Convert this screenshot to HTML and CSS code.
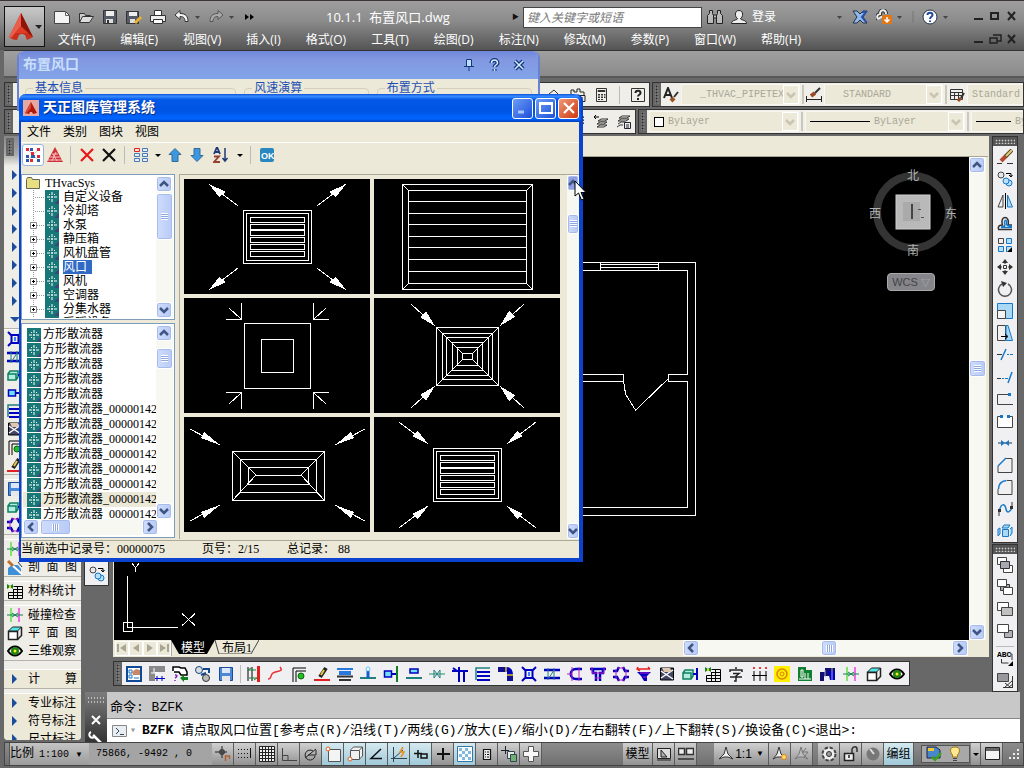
FILE: index.html
```
<!DOCTYPE html>
<html lang="zh-CN">
<head>
  <meta charset="UTF-8">
  <title>10.1.1 布置风口.dwg</title>
  <link rel="stylesheet" href="styles.css">
</head>
<body>

  <header class="app-header">
    <button class="app-logo" title="应用程序菜单">
      <svg width="36" height="30" viewBox="0 0 36 30">
        <path d="M14 1 L2 25 Q5 28 10 28 L12 23 Q15 21 18 23 L20 28 L26 25 Z" fill="#c8301c"/>
        <path d="M14 1 L14 14 L4 26 L2 25 Z" fill="#e8604c"/>
        <path d="M14 1 L26 25 L14 15 Z" fill="#8e1408"/>
        <path d="M8 21 L14 14 L21 21 Z" fill="#e03c28"/>
        <path d="M28 13 h7 l-3 4z" fill="#222"/>
      </svg>
    </button>
    <div class="header-rows">
      <div class="quick-row">
        <div class="quick-icons" data-icons="new open save saveas print undo caret redo caret more"></div>
        <div class="doc-title">10.1.1&nbsp; 布置风口.dwg</div>
        <div class="search-area">
          <span class="tri">▶</span>
          <input class="search-box" type="text" aria-label="搜索" placeholder="键入关键字或短语">
          <div class="mini" data-icons="binoc user"></div>
          <a class="login" href="#">登录</a>
        </div>
        <div class="help-icons" data-icons="caret exchange cloud caret hsep help caret"></div>
        <div class="win-btns" data-icons="wmin wmax wclose"></div>
      </div>
      <div class="menu-row">
        <nav class="menu">
          <a href="#">文件(F)</a><a href="#">编辑(E)</a><a href="#">视图(V)</a><a href="#">插入(I)</a><a href="#">格式(O)</a><a href="#">工具(T)</a><a href="#">绘图(D)</a><a href="#">标注(N)</a><a href="#">修改(M)</a><a href="#">参数(P)</a><a href="#">窗口(W)</a><a href="#">帮助(H)</a>
        </nav>
        <div class="win-btns dark" data-icons="wmin wrest wclose"></div>
      </div>
    </div>
  </header>
  <div class="ribbon-strip"></div>

  <!-- style and property bars -->
  <div class="bar-row">
    <div class="bar bar-std">
      <span class="grip"></span>
      <div class="bar-icons" data-icons="sheet plot cleanup calc | qhelp"></div>
    </div>
    <div class="bar bar-grow">
      <span class="grip"></span>
      <span data-icon="textstyle"></span>
      <div class="combo w-style"><select disabled aria-label="文字样式"><option>_THVAC_PIPETEXT</option></select><i data-icon="down"></i></div>
      <span class="vsep"></span>
      <span data-icon="dimstyle"></span>
      <div class="combo w-style"><select disabled aria-label="标注样式"><option>STANDARD</option></select><i data-icon="down"></i></div>
      <span class="vsep"></span>
      <span data-icon="tablestyle"></span>
      <div class="combo w-style flush"><select disabled aria-label="表格样式"><option>Standard</option></select><i data-icon="down"></i></div>
    </div>
  </div>
  <div class="bar-row">
    <div class="bar bar-layer">
      <span class="grip"></span>
      <div class="bar-icons" data-icons="layers layerprev layerstate"></div>
    </div>
    <div class="bar bar-grow">
      <span class="grip"></span>
      <div class="combo w-color"><b class="swatch"></b><select disabled aria-label="颜色"><option>ByLayer</option></select><i data-icon="down"></i></div>
      <span class="vsep"></span>
      <div class="combo w-line"><b class="line long"></b><select disabled aria-label="线型"><option>ByLayer</option></select><i data-icon="down"></i></div>
      <span class="vsep"></span>
      <div class="combo w-line"><b class="line"></b><select disabled aria-label="线宽"><option>ByLayer</option></select><i data-icon="down"></i></div>
    </div>
  </div>

  <main class="work">
    <aside class="palette" id="palette">
      <div class="palette-head"><span class="grip"></span></div>
    </aside>

    <div class="work-right">
      <div class="work-top">
        <div class="side-bar draw-bar" data-icons="copy"></div>
        <div class="center">
          <section class="drawing">
            <div class="drawing-head"></div>
            <div class="canvas-row">
              <div class="canvas">
                <svg class="plan" viewBox="115 157 854 483" preserveAspectRatio="xMinYMin slice" shape-rendering="crispEdges">
                  <g fill="none" stroke="#fff">
                    <path d="M500 262.500H695.500V515.500H500M500 270.500H687.500V374.500H668.500V381.500H687.500V507.500H500M500 374.500H623.500V381.500H500"/>
                    <path d="M600.500 262V270M658.500 262V270M600 264.500H658M600 267.500H658"/>
                    <path d="M624 381L626 394L636 410L668 379"/>
                    <path d="M128.500 576V626M128 626.500H179M124.500 621.500h9v9h-9zM183 613L196 625M196 613L183 625M133 563l3.500 4l3.500-4M136.500 567v5"/>
                  </g>
                </svg>
                <div class="compass">
                  <svg width="88" height="88" viewBox="0 0 88 88">
                    <circle cx="44" cy="44" r="36" fill="none" stroke="#343434" stroke-width="8"/>
                    <rect x="27" y="27" width="34" height="34" fill="#b9b9b9" stroke="#cfcfcf"/>
                    <rect x="34" y="34" width="17" height="19" fill="#aaa"/>
                    <path d="M43 36V51" stroke="#444" stroke-width="2"/>
                    <path d="M49 41.500h3M52 49.500h3" stroke="#555"/>
                  </svg>
                  <span class="n">北</span><span class="w">西</span><span class="e">东</span><span class="s">南</span>
                </div>
                <button class="wcs">WCS <span>▽</span></button>
              </div>
              <div class="sb v" data-sb="186 17 245"></div>
            </div>
            <div class="tabs-row">
              <div class="tab-nav" data-icons="first prev next last"></div>
              <button class="tab active"><svg viewBox="0 0 44 14" preserveAspectRatio="none"><path d="M0 0H44L36 14H8z" fill="#000"/></svg><span>模型</span></button>
              <button class="tab"><svg viewBox="0 0 44 14" preserveAspectRatio="none"><path d="M0 0L4 14H36L44 0" fill="#ece9d8" stroke="#444"/></svg><span>布局1</span></button>
              <div class="sb h hmain" data-sb="121 16 114"></div>
            </div>
          </section>
          <div class="bottom-bar">
            <span class="grip"></span>
            <div data-icons="t1 t2 t3 t4 t5 | t6 t7 t8 t9 t10 t11 t12 t13 t14 t15 t16 t17 t18 t19 t20 t21 t22 t23 t24 t25 mat zi t29 t30 t31 t32 clash cube eye"></div>
          </div>
        </div>
        <div class="side-col">
          <div class="side-bar">
            <span class="grip-h"></span>
            <div data-icons="erase copy mirror offset array move rotate scale stretch trim extend breakpt break join chamfer fillet spline explode"></div>
          </div>
          <div class="side-bar">
            <span class="grip-h"></span>
            <div data-icons="ord1 ord2 ord3 ord4 _ abc hatchback"></div>
          </div>
        </div>
      </div>

      <section class="command">
        <div class="command-strip" data-icons="dots cx wrench"></div>
        <div class="command-lines">
          <div class="history">命令: BZFK</div>
          <div class="prompt">
            <span data-icon="prompt"></span><span class="drop">▾</span>
            <label for="cmd"><b>BZFK</b> 请点取风口位置[参考点(R)/沿线(T)/两线(G)/放大(E)/缩小(D)/左右翻转(F)/上下翻转(S)/换设备(C)&lt;退出&gt;:</label>
            <input id="cmd" type="text">
          </div>
        </div>
      </section>
    </div>
  </main>

  <footer class="status">
    <button class="scale-btn">比例 <em>1:100</em> <span>▼</span></button>
    <div class="coords">75866, -9492 , 0</div>
    <div class="status-icons" data-icons="s1 s2 s3 s4 s5 s6 s7 s8 s9 s10 s11 s12 s13 s14 s15"></div>
    <span class="gap"></span>
    <button class="cell">模型</button>
    <div class="status-icons" data-icons="r1 r2"></div>
    <span class="gap small"></span>
    <button class="cell ratio"><i data-icon="anno"></i>1:1 <span>▼</span></button>
    <div class="status-icons" data-icons="anno2 anno3"></div>
    <span class="gap tiny"></span>
    <div class="status-icons" data-icons="gear lock ball"></div>
    <button class="cell on">编组</button>
    <div class="tray" data-icons="monitor bulb"></div>
    <div class="status-icons narrow" data-icons="caret2"></div>
    <div class="status-icons" data-icons="clean"></div>
    <span class="corner" data-icon="corner"></span>
  </footer>

  <!-- diffuser palette, behind the library window -->
  <section class="win back">
    <div class="back-title"><span>布置风口</span><div data-icons="pin bhelp bclose"></div></div>
    <div class="back-body">
      <fieldset><legend>基本信息</legend></fieldset>
      <fieldset><legend>风速演算</legend></fieldset>
      <fieldset><legend>布置方式</legend></fieldset>
    </div>
  </section>

  <section class="win lib">
    <div class="lib-title">
      <span data-icon="acad"></span><h1>天正图库管理系统</h1>
      <button class="xp" data-icon="xmin" title="最小化"></button>
      <button class="xp" data-icon="xmax" title="最大化"></button>
      <button class="xp close" data-icon="xclose" title="关闭"></button>
    </div>
    <nav class="lib-menu"><a href="#">文件</a><a href="#">类别</a><a href="#">图块</a><a href="#">视图</a></nav>
    <div class="lib-tools" data-icons="lt1 lt2 | lt3 lt4 | lt5 caret2 lt6 lt7 lt8 caret2 | lt9"></div>
    <div class="lib-body">
      <div class="lib-left">
        <div class="box tree-box">
          <ul class="tree" id="tree"></ul>
          <div class="sb v" data-sb="1 47 64"></div>
        </div>
        <div class="box list-box">
          <div class="list-main">
            <ul class="list" id="list"></ul>
            <div class="sb v" data-sb="7 21 132"></div>
          </div>
          <div class="sb h" data-sb="1 31 67"></div>
        </div>
      </div>
      <div class="lib-right">
        <div class="thumbs" id="thumbs"></div>
        <div class="sb v thin" data-sb="23 20 291"></div>
      </div>
    </div>
    <div class="lib-status"><span>当前选中记录号：00000075</span><span>页号：2/15</span><span>总记录： 88</span></div>
  </section>

  <svg class="pointer" width="14" height="22" viewBox="0 0 14 22"><path d="M1 1V16L4.500 13L7.500 20L10 19L7 12.500H12Z" fill="#fff" stroke="#000"/></svg>

  <script src="script.js"></script>
</body>
</html>
```

FILE: styles.css
```
* {
  box-sizing: border-box;
}
body {
  margin: 0;
  height: 100vh;
  min-height: 600px;
  display: flex;
  flex-direction: column;
  overflow: hidden;
  position: relative;
  background: #686868;
  padding: 0 0 2px 4px;
  font-family: "Liberation Serif", "Noto Sans CJK SC", serif;
  font-size: 12px;
  line-height: 16px;
  color: #000;
}
button, input, select {
  font: inherit;
  color: inherit;
  margin: 0;
  padding: 0;
  border: 0;
  background: none;
  border-radius: 0;
}
a {
  color: inherit;
  text-decoration: none;
}
ul {
  list-style: none;
  margin: 0;
  padding: 0;
}
svg {
  display: block;
  flex: none;
}
[data-icons] {
  display: flex;
  align-items: center;
}
[data-icon] {
  display: flex;
  align-items: center;
  justify-content: center;
}

/* header */
.app-header {
  flex: 0 0 50px;
  margin-left: -4px;
  padding: 6px 4px 0 4px;
  display: flex;
  border-top: 1px solid #3a3438;
  background: linear-gradient(#9e9e9e, #8c8c8c 40%, #545454);
  color: #fff;
  font-family: "Open Sans", "Noto Sans CJK SC", sans-serif;
}
.app-logo {
  width: 41px;
  height: 41px;
  margin-top: -1px;
  border: 1px solid #111;
  background: linear-gradient(#c8c8c8, #8a8a8a);
  display: flex;
  align-items: center;
  justify-content: center;
}
.header-rows {
  flex: 1;
  min-width: 0;
}
.quick-row {
  display: flex;
  align-items: center;
  height: 20px;
}
.quick-icons {
  margin-left: 9px;
  gap: 8px;
  width: 272px;
}
.quick-icons .caret {
  width: 8px;
  margin: 0 -2px 0 -4px;
}
.caret {
  overflow: hidden;
  display: flex;
  justify-content: center;
}
.doc-title {
  width: 186px;
  font-size: 13px;
}
.search-area {
  display: flex;
  align-items: center;
  flex: 1;
}
.tri {
  color: #111;
  font-size: 7px;
  width: 11px;
}
.search-box {
  width: 179px;
  height: 21px;
  background: #fff;
  border: 1px solid #444;
  padding-left: 3px;
  color: #777;
}
.search-box::placeholder {
  color: #777;
  font-style: italic;
}
.mini {
  gap: 8px;
  margin: 0 5px;
}
.help-icons {
  gap: 8px;
  margin-right: 22px;
}
.help-icons .caret {
  width: 8px;
  margin-left: -4px;
}
.help-icons .hsep {
  width: 2px;
  overflow: hidden;
  display: flex;
  justify-content: center;
}
.win-btns {
  color: #222;
}
.menu-row {
  display: flex;
  justify-content: space-between;
  align-items: center;
  height: 20px;
  margin-top: 3px;
}
.menu {
  display: flex;
  gap: 25px;
  margin-left: 13px;
}
.ribbon-strip {
  flex: 0 0 28px;
  margin-bottom: 4px;
  background: linear-gradient(#a0a0a0, #8a8a8a);
  border-top: 1px solid #333;
  border-bottom: 2px solid #585858;
}

/* property bars */
.bar-row {
  display: flex;
  gap: 2px;
  height: 25px;
  margin-bottom: 2px;
  overflow: hidden;
}
.bar {
  display: flex;
  align-items: center;
  flex: none;
  border: 1px solid #333;
  background: #efeee9;
}
.bar-std {
  width: 646px;
}
.bar-layer {
  width: 632px;
}
.bar-grow {
  flex: 1 0 0;
  min-width: 0;
  overflow: hidden;
  gap: 2px;
}
.bar-grow > [data-icon] {
  width: 24px;
}
.bar-icons {
  margin-left: auto;
  gap: 7px;
  padding-right: 3px;
}
.bar-icons .sep {
  margin: 0 3px;
}
.grip {
  flex: 0 0 8px;
  align-self: stretch;
  background: radial-gradient(circle, #222 40%, transparent 50%) 0 3px / 3px 3px #777;
  border: 2px solid #666;
}
.combo {
  display: flex;
  align-items: center;
  flex: none;
  height: 21px;
  border: 1px solid #f8f6ee;
  background: #ece9d8;
  color: #a9a797;
  font-family: "Liberation Mono", monospace;
  font-size: 10px;
}
.combo select {
  flex: 1;
  min-width: 0;
  appearance: none;
  opacity: 1;
  padding-left: 18px;
}
.combo.flush select {
  padding-left: 4px;
}
.combo i {
  width: 16px;
  height: 19px;
  border: 1px solid #fff;
  color: #c9c5b2;
}
.w-style {
  width: 119px;
}
.w-color {
  width: 150px;
}
.w-color select {
  padding-left: 4px;
}
.w-line {
  width: 160px;
}
.w-line select {
  padding-left: 4px;
}
.swatch {
  width: 10px;
  height: 10px;
  margin-left: 4px;
  border: 1px solid #000;
  background: #fff;
}
.line {
  width: 35px;
  height: 1px;
  margin-left: 4px;
  background: #000;
}
.line.long {
  width: 60px;
}
.vsep {
  width: 5px;
  height: 19px;
  border: 1px solid #cbc8bb;
  border-width: 0 1px;
}

/* work area */
.work {
  flex: 1;
  min-height: 0;
  display: flex;
  gap: 3px;
}
.palette {
  flex: 0 0 77px;
  overflow: hidden;
  margin-bottom: 2px;
  border-radius: 0 0 4px 4px;
  background: #efede8;
}
.palette-head {
  height: 30px;
  padding: 2px 0 10px 2px;
  display: flex;
  background: linear-gradient(#888, #a8a8a8 60%, #efede8);
}
.palette-row {
  display: flex;
  align-items: center;
  height: 18px;
  width: 100%;
  gap: 5px;
  padding: 0 4px 0 3px;
}
.wide ~ .palette-row {
  background: #ece9d8;
}
.palette-row span {
  flex: 1;
  display: flex;
  justify-content: space-between;
}
.palette-row i {
  font-style: normal;
}
.palette-sep {
  height: 6px;
  border: solid #b4b2aa;
  border-width: 1px 0;
  border-bottom-color: #fff;
}
.palette-sep.first {
  height: 2px;
}
.palette-sep.wide {
  height: 10px;
}
.work-right {
  flex: 1;
  min-width: 0;
  display: flex;
  flex-direction: column;
}
.work-top {
  flex: 1;
  min-height: 0;
  display: flex;
  padding-right: 6px;
}
.side-bar {
  border: 1px solid #333;
  background: #f0f0f2;
}
.side-bar [data-icons] {
  flex-direction: column;
}
.side-bar button {
  height: 22px;
}
.draw-bar {
  width: 25px;
  height: 450px;
  margin-right: 4px;
  flex-direction: column;
  justify-content: flex-end;
}
.side-col {
  width: 26px;
  display: flex;
  flex-direction: column;
  gap: 1px;
}
.grip-h {
  display: block;
  height: 9px;
  border: 2px solid #555;
  background: radial-gradient(circle, #ccc 40%, transparent 50%) 0 0 / 3px 3px #555;
}
.sep-h {
  width: 18px;
  height: 5px;
  border-bottom: 1px solid #bbb;
}
.center {
  flex: 1;
  min-width: 0;
  display: flex;
  flex-direction: column;
  margin-right: 3px;
}
.drawing {
  flex: 1;
  min-height: 0;
  display: flex;
  flex-direction: column;
  border: 1px solid #ece9d8;
  background: #ece9d8;
}
.drawing-head {
  height: 20px;
  border-bottom: 1px solid #a8a594;
}
.canvas-row {
  flex: 1;
  min-height: 0;
  display: flex;
  padding-right: 2px;
}
.canvas {
  flex: 1;
  min-width: 0;
  position: relative;
  background: #000;
  overflow: hidden;
}
.plan {
  width: 100%;
  height: 100%;
}
.compass {
  position: absolute;
  right: 12px;
  top: 11px;
  width: 88px;
  height: 88px;
  font-family: "Noto Sans CJK SC", sans-serif;
  font-size: 12px;
  color: #b0b0b0;
}
.compass span {
  position: absolute;
}
.compass .n {
  left: 38px;
  top: -1px;
}
.compass .s {
  left: 38px;
  bottom: -2px;
}
.compass .w {
  left: 0;
  top: 37px;
}
.compass .e {
  right: 0;
  top: 37px;
}
.wcs {
  position: absolute;
  right: 34px;
  top: 116px;
  width: 48px;
  height: 18px;
  border: 1px solid #aaa;
  border-radius: 4px;
  background: #85858b;
  color: #444;
  font-family: "Liberation Sans", sans-serif;
  font-size: 11px;
  line-height: 14px;
}
.wcs span {
  font-size: 9px;
  color: #bbb;
}

/* scroll bars */
.sb {
  display: flex;
  flex: none;
  background: #f8f8f2;
}
.sb.v {
  flex-direction: column;
  width: 17px;
}
.sb.h {
  height: 16px;
}
.sb button, .sb .thumb {
  flex: none;
  display: flex;
  align-items: center;
  justify-content: center;
  overflow: hidden;
  border: 1px solid #fff;
  border-radius: 3px;
  background: linear-gradient(90deg, #cfdcfc, #b8cbf6);
  box-shadow: inset 0 0 0 1px #a8bcec;
  color: #3f5684;
}
.sb button {
  width: 16px;
  height: 16px;
}
.sb .thumb::after {
  content: "";
  width: 7px;
  height: 7px;
  background: repeating-linear-gradient(#fff 0 1px, #8fa8e0 1px 2px);
}
.sb.h .thumb::after {
  background: repeating-linear-gradient(90deg, #fff 0 1px, #8fa8e0 1px 2px);
}
.sb.thin, .sb.thin button {
  width: 12px;
}
.sb.thin button:first-child {
  background: #8f9ee0;
}
.tabs-row {
  display: flex;
  height: 16px;
}
.tab-nav {
  margin-left: 1px;
}
.tab-nav button {
  width: 14px;
  height: 15px;
  border: 1px solid #fff;
  box-shadow: 1px 0 0 #aaa;
  color: #a8a594;
  overflow: hidden;
  display: flex;
  align-items: center;
  justify-content: center;
}
.tab {
  position: relative;
  width: 44px;
  line-height: 15px;
}
.tab svg {
  position: absolute;
  left: 0;
  top: 0;
  width: 100%;
  height: 14px;
}
.tab span {
  position: relative;
}
.tab.active {
  color: #fff;
}
.hmain {
  margin-left: auto;
  width: 285px;
  margin-right: 20px;
}
.bottom-bar {
  align-self: flex-start;
  display: flex;
  max-width: 100%;
  margin: 4px 0 6px 0;
  border: 1px solid #333;
  background: #f0f0f2;
  height: 25px;
}
.bottom-bar [data-icons] {
  gap: 7px;
  padding: 0 4px 0 4px;
}
.bottom-bar .sep {
  margin: 0 -3px 0 -1px;
}
.sep {
  width: 1px;
  height: 18px;
  background: #bbb;
}

/* command line */
.command {
  display: flex;
  height: 50px;
  margin: 0 4px 0 1px;
}
.command-strip {
  width: 22px;
  flex-direction: column;
  padding-top: 2px;
  gap: 2px;
  background: linear-gradient(#7c7c7c, #333);
}
.command-lines {
  flex: 1;
  min-width: 0;
  font-family: "Liberation Mono", "Noto Sans CJK SC", monospace;
  font-size: 13px;
  white-space: nowrap;
}
.history {
  height: 27px;
  padding: 7px 3px 0;
  background: #c8c8c8;
  line-height: 17px;
  border-bottom: 1px solid #888;
}
.prompt {
  display: flex;
  align-items: center;
  height: 23px;
  padding-left: 5px;
  background: #fff;
}
.drop {
  width: 14px;
  padding-left: 2px;
  color: #999;
  font-size: 10px;
}
.prompt input {
  flex: 1;
  min-width: 0;
  outline: 0;
}

/* status bar */
.status {
  display: flex;
  height: 24px;
  border: 1px solid #444;
  background: linear-gradient(#8c8c8c, #707070);
}
.status-icons button, .cell {
  width: 22px;
  height: 22px;
  border-right: 1px solid #5c5c5c;
  background: linear-gradient(#d0d0d0, #929292);
  display: flex;
  align-items: center;
  justify-content: center;
}
.status .s6, .status .s7, .status .s8, .status .s9, .status .s10, .status .s12, .cell.on {
  background: linear-gradient(#d5e9f0, #a0c9d8);
}
.scale-btn {
  width: 80px;
  margin-left: 4px;
  border-left: 1px solid #555;
  background: linear-gradient(#c4c4c4, #9c9c9c);
  text-align: left;
}
.scale-btn em {
  font-style: normal;
  margin-left: 2px;
  font-family: "Liberation Mono", monospace;
  font-size: 10px;
}
.scale-btn span, .ratio span {
  font-size: 8px;
  margin-left: 3px;
}
.coords {
  width: 123px;
  padding-left: 7px;
  line-height: 22px;
  background: #a4a4a4;
  font-family: "Liberation Mono", monospace;
  font-size: 10px;
}
.cell {
  width: 30px;
}
.ratio {
  width: 55px;
  gap: 1px;
  font-family: "Liberation Sans", sans-serif;
}
.gap {
  flex: 1;
}
.gap.small {
  flex: 0 0 17px;
}
.gap.tiny {
  flex: 0 0 5px;
}
.tray {
  align-self: center;
  gap: 5px;
  margin: 0 1px 0 7px;
  padding: 0 4px;
  width: 49px;
  height: 18px;
  border: 1px solid #555;
  background: #a8a8a8;
}
.status .narrow button {
  width: 10px;
}
.corner {
  width: 20px;
}

/* floating windows */
.win {
  position: absolute;
  background: #ece9d8;
}
.back {
  left: 17px;
  top: 51px;
  width: 523px;
  height: 60px;
  border: 1px solid #6a80d0;
  border-radius: 7px 7px 0 0;
  border-width: 0 2px;
  overflow: hidden;
}
.back-title {
  display: flex;
  align-items: center;
  justify-content: space-between;
  height: 28px;
  padding: 0 11px 0 4px;
  background: linear-gradient(#6f86dc, #8298e0 30%, #82a4ea);
  color: #c8dffc;
  font-size: 14px;
  font-weight: bold;
}
.back-title div {
  gap: 9px;
}
.back-body {
  display: flex;
  gap: 8px;
  padding: 1px 6px;
}
.back fieldset {
  margin: 0;
  height: 50px;
  padding: 0 7px;
  border: 1px solid #d3cfba;
  border-radius: 4px;
  color: #1c4fb4;
}
.back fieldset:nth-child(1) {
  flex: 216;
}
.back fieldset:nth-child(2) {
  flex: 120;
}
.back fieldset:nth-child(3) {
  flex: 154;
}
.back legend {
  padding: 0 2px;
}
.lib {
  left: 19px;
  top: 94px;
  width: 564px;
  border: 2px solid #0b43d0;
  border-bottom-width: 4px;
  border-top: 0;
  border-right-width: 4px;
  border-radius: 7px 7px 0 0;
}
.lib-title {
  display: flex;
  align-items: center;
  height: 28px;
  margin: 0 -2px;
  padding: 0 2px 0 4px;
  gap: 2px;
  border-radius: 7px 7px 0 0;
  background: linear-gradient(#0a50d8, #3a8cff 8%, #0458e8 20%, #0054e3 60%, #0066ff 88%, #0040c0);
  color: #fff;
}
.lib-title h1 {
  flex: 1;
  margin: 0 0 0 2px;
  font-size: 14px;
  line-height: 20px;
  text-shadow: 1px 1px #0a2c80;
}
.xp {
  width: 21px;
  height: 21px;
  border: 1px solid #fff;
  border-radius: 3px;
  background: linear-gradient(135deg, #6c9cf8, #1c50d8);
}
.xp.close {
  background: linear-gradient(135deg, #f09878, #cc3810);
}
.lib-menu {
  display: flex;
  gap: 12px;
  height: 20px;
  padding: 2px 6px;
}
.lib-tools {
  height: 32px;
  padding: 0 2px 7px 1px;
  border-top: 1px solid #fff;
}
.lib-tools button {
  width: 22px;
  height: 22px;
  display: flex;
  align-items: center;
  justify-content: center;
}
.lib-tools .caret2 {
  width: 12px;
}
.lib-tools .lt1 {
  border: 1px solid #98b5e2;
  border-radius: 3px;
  background: #fff;
}
.lib-tools .lt8 {
  width: 26px;
}
.lib-tools .sep {
  margin: 0 5px 0 4px;
}
.lib-body {
  display: flex;
  gap: 4px;
}
.lib-left {
  width: 154px;
  display: flex;
  flex-direction: column;
  gap: 3px;
}
.box {
  border: 1px solid #7f9db9;
  background: #fff;
  overflow: hidden;
}
.tree-box {
  display: flex;
  height: 146px;
  padding: 1px;
}
.tree {
  flex: 1;
  min-width: 0;
  line-height: 14px;
  overflow: hidden;
}
.tree li {
  display: flex;
  align-items: center;
  height: 14px;
}
.tree li > svg {
  margin-right: 4px;
}
.tree .sel {
  background: #316ac5;
  color: #fff;
  padding-right: 5px;
}
.list-box {
  height: 215px;
  padding: 1px;
}
.list-main {
  display: flex;
  height: 194px;
}
.list {
  flex: 1;
  min-width: 0;
  padding-top: 2px;
  overflow: hidden;
  white-space: nowrap;
}
.list li {
  display: flex;
  align-items: center;
  height: 15px;
  padding-left: 4px;
  line-height: 15px;
  gap: 2px;
}
.list li.hot {
  background: #ece9d8;
}
.list-box > .sb {
  margin-right: 15px;
}
.lib-right {
  flex: 1;
  display: flex;
  gap: 2px;
  border: 1px solid #aca899;
  border-width: 1px 0 0 1px;
}
.thumbs {
  flex: 1;
  display: grid;
  grid-template-columns: 1fr 1fr;
  gap: 4px;
  padding: 4px 5px 7px 4px;
}
.thumbs button {
  background: #000;
  height: 115px;
  overflow: hidden;
}
.lib-status {
  display: flex;
  height: 18px;
  margin-top: 1px;
  border-top: 1px solid #aca899;
}
.lib-status span {
  min-width: 85px;
}
.lib-status span:first-child {
  min-width: 181px;
}
.pointer {
  position: absolute;
  left: 574px;
  top: 180px;
}
```

FILE: script.js
```
// icon artwork, 16x16 each
const P = (d, c = '#333', w = 1, f = 'none') => `<path d="${d}" fill="${f}" stroke="${c}" stroke-width="${w}"/>`;
const F = (d, c = '#333') => `<path d="${d}" fill="${c}"/>`;
const B = '#1878c8', N = '#0000c0', T = '#208080', M = '#c020c0';

const icons = {
  new: P('M.5 2.500h11l4 4v8H.5z', '#444', 1, '#f4f4f4') + P('M11.500 2.500v4h4', '#666'),
  open: P('M1.500 13V4.500h5l1 2h5V8', '#333', 1, '#ccc') + P('M1.500 13.500l3-6h11l-4 6z', '#333', 1, '#ddd'),
  save: P('M1.500 1.500h13v13h-13z', '#333', 1, '#555c68') + F('M4 2h8v5h-8z', '#eee') + F('M4 10h7v4h-7z', '#ddd') + F('M5 11h2v3h-2z', '#333'),
  saveas: P('M.5 2.500h12v12h-12z', '#333', 1, '#555c68') + F('M3 3h8v4h-8z', '#eee') + F('M4 10h5v4h-5z', '#ddd') + P('M9 14l6-6', '#e8b030', 3),
  print: P('M4.500 6V1.500h7V6', '#333', 1, '#fff') + P('M.5 6.500h15v6H.5z', '#333', 1, '#eee') + P('M3.500 10.500h9v4h-9z', '#333', 1, '#fff'),
  undo: P('M1 6l5-4.500V4.500c6 0 8 3 8 8h-3c0-3-1-5-5-5v3z', '#333', 1, '#f4f4f4'),
  redo: P('M15 6l-5-4.500V4.500c-6 0-8 3-8 8h3c0-3 1-5 5-5v3z', '#555', 1, '#aaa'),
  caret: F('M5 7h5l-2.500 3z', '#444'),
  caret2: F('M5 7h6l-3 3z', '#000'),
  more: F('M3 5l4 3-4 3zM8 5l4 3-4 3z', '#000'),
  binoc: P('M2.500 1.500h3v3l1 2v8h-6V6.500l2-2zM10.500 1.500h3v3l2 2v8h-6v-8l1-2zM6.500 6h3v3h-3z', '#222', 1, '#bbb'),
  user: P('M8 1.500c5 0 4 7 1.500 8 0 2 6 1 6 5H.5c0-4 6-3 6-5C4 8.500 3 1.500 8 1.500z', '#222', 1, '#eee'),
  exchange: P('M1 2h4l3 3 3-3h4l-4 6 4 6h-4l-3-3-3 3H1l4-6z', '#234', 1, '#8fb8ee') + P('M10 3h4l-4 5 4 5', '#2850a8', 2),
  cloud: P('M2 10a3 3 0 0 1 2-5c0-5 6-5 6 0', '#333', 4) + P('M2 10a3 3 0 0 1 2-5c0-5 6-5 6 0M2 10l5-3', '#eee', 2) + F('M6 6h10v9H6z', '#e07818') + P('M11 8v5M8.500 10.500L11 13l2.500-2.500', '#fff', 1.5),
  hsep: P('M8 2v12', '#777'),
  help: '<circle cx="8" cy="8" r="7" fill="#fff" stroke="#234"/>' + P('M5.500 6c0-3 5-3 5 0 0 2-2.500 1.500-2.500 4M8 11.500v1.500', '#2048a0', 2),
  wmin: P('M2 10h9', '#222', 2), wmax: P('M3 4h7v6H3z', '#222', 2), wclose: P('M4 3l7 8M11 3l-7 8', '#222', 2),
  wrest: P('M5 3h8v6H9M2 6h7v5H2z', '#222', 1.5),

  sheet: P('M2.500 2.500h11v11h-11zM5 5h6v4H5z'), plot: P('M2 7l5-4 6 6v4H4zM5 9h9'),
  cleanup: P('M1 3h3v2h3V2h3v3h4v4M1 3v6h5M8 8.500h7v6H8zM10 11h3M10 13h3', '#222'),
  calc: P('M3.500 1.500h10v13h-10zM5 3.500h7v1H5z') + F('M5 7h2v1.500h-2zM8 7h2v1.500h-2zM11 7h1.500v1.500h-1.500zM5 9.500h2v1.500h-2zM8 9.500h2v1.500h-2zM11 9.500h1.500v1.500h-1.500zM5 12h2v1h-2zM8 12h2v1h-2z'),
  qhelp: P('M1.500 1.500h13v13h-13z') + P('M5.500 6c0-3 5-3 5 0 0 2-2.500 1.500-2.500 3.500M8 11v2', '#222', 2),
  textstyle: P('M1 11L5 1l4 10M2.500 8h5', '#222', 2) + P('M8 14l3-3', '#9c5020', 4) + P('M11 10l4-5', '#333', 2),
  dimstyle: P('M.5 9v6M15.500 9v6M1 12.500h14', '#222') + P('M5 9l4-3', '#9c4820', 4) + P('M9 6l5-5', '#333', 2),
  tablestyle: P('M1.500 2.500h12v10h-12zM1.500 5.500h12M1.500 8.500h12M5.500 5v8M9.500 5v8') + P('M9 14l3-3', '#9c4820', 3) + P('M12 11l3-5', '#333', 2),
  layers: P('M2 5l3-2h9l-3 2zM2 8l3-2h9l-3 2zM2 11l3-2h9l-3 2z'),
  layerprev: P('M1 3h5M3 1L1 3l2 2', '#000') + P('M5 7l3-2h7l-3 2zM4 10l3-2h7l-3 2zM4 13l3-2h7l-3 2z'),
  layerstate: P('M3 4l3-2h8l-3 2zM2 7l3-2h8l-3 2zM2 10l3-2h4M1 13l3-2h3') + P('M8.500 8.500h6v6h-6zM10 11h3M10 13h3', '#223'),

  up: P('M4 10l4-4 4 4', 'currentColor', 2.5), down: P('M4 6l4 4 4-4', 'currentColor', 2.5),
  left: P('M10 4L6 8l4 4', 'currentColor', 2.5), right: P('M6 4l4 4-4 4', 'currentColor', 2.5),
  first: F('M3 4h2v8h-2zM12 4v8l-6-4z', 'currentColor'), prev: F('M11 4v8l-6-4z', 'currentColor'),
  next: F('M5 4v8l6-4z', 'currentColor'), last: F('M11 4h2v8h-2zM4 4v8l6-4z', 'currentColor'),

  // modify bar
  erase: P('M0 14.500h5M10 14.500h6', '#333') + P('M4 12l5-5', '#b84830', 4) + P('M8.500 7.500L15 1', '#5a4a20', 4) + P('M9 7l6-6', '#e0c880', 2),
  copy: '<circle cx="4" cy="4" r="3" fill="#e8e8e8" stroke="#444"/><circle cx="12" cy="12" r="3" fill="#b8e0f8" stroke="#1878c8"/><circle cx="9" cy="10" r="3" fill="#b8e0f8" stroke="#1878c8"/>' + P('M9 2.500h5v3M12 4l2 2 1.500-2', '#000'),
  mirror: P('M6 2v12H1z', '#444') + P('M8.500 0v16', '#000') + P('M10.500 2v12h5z', B, 1, '#a8d8f4'),
  offset: P('M1 14.500H15M1.500 14c-1-4 3-4 4-4-3-10 8-10 5.500 0H15', '#333', 1.5) + P('M4 12.500h11M4 12c3 0 5-1 3.500-4 0-4 3-3 2 0-.5 2 1 3 5.500 3', B, 1.5),
  array: P('M1.500 1.500h5v5h-5z', '#444') + P('M9.500 1.500h5v5h-5zM1.500 9.500h5v5h-5zM9.500 15V9.500h5', B, 1, '#b8e0f4') + F('M15 10v5h-5z', '#000'),
  move: P('M8 1v4M8 11v4M1 8h4M11 8h4M6.500 6.500h3v3h-3z', '#333') + F('M8 0l3 4H5zM8 16l3-4H5zM0 8l4-3v6zM16 8l-4-3v6z'),
  rotate: P('M5 3a6.500 6.500 0 1 0 6 0', '#555', 1.5) + F('M4 0l6 2-4 4z'),
  scale: P('M.5.500h15v15H.5z', B, 1, '#a8d8f4') + P('M.5 7.500h8v8h-8z', '#444', 1, '#f4f4f4'),
  stretch: P('M.5.500h8v15h-8z', '#444') + P('M9 .5h2l4.500 15H9z', B, 1, '#a8d8f4') + P('M4 11.500h6M8 9l3 2.500L8 14', '#000'),
  trim: P('M0 7.500h5', '#333') + P('M4 13L9 2', B, 1.5) + P('M10 7.500h2M13 7.500h3', B),
  extend: P('M0 9.500h4', '#333') + P('M5 9.500h2M8 9.500h3', B) + P('M11 14l4-11', B, 1.5),
  breakpt: P('M12 3.500H.5v10H16', '#444') + F('M11 2h3v3h-3z', B),
  break: P('M4 3.500H.5v11h15v-11H12', '#444', 1, '#fff') + F('M3 2h3v3H3zM10 2h3v3h-3z', B),
  join: P('M1 8h14', '#333') + F('M4 5l4 3-4 3zM12 5L8 8l4 3z', B),
  chamfer: P('M9 1.500h6v14h-14V9', '#444', 1, '#f0f0f0') + P('M1 9L9 1', B, 1.5),
  fillet: P('M10 1.500h5v14h-14V10', '#444', 1, '#f0f0f0') + P('M1.500 10c0-6 4-8 8-8.500', B, 1.5),
  spline: P('M2 11C4 1 8 3 9 8s4 3 6-1', B, 1.5) + P('M2 8v7M15 1v7', '#333') + F('M1 8h3v3h-3zM13 5h3v3h-3z'),
  explode: P('M5.500 6.500h6v7h-6zM5 5l2-3h6l-2 3zM13 6l2-2v6l-2 3M1 6l2-1v6l-2 2z', B, 1, '#a8d8f4'),
  ord1: P('M.5.500h9v7h-9zM6.500 8.500h9v7h-9z', '#444', 1, '#fff') + P('M3.500 4.500h9v7h-9z', '#333', 1, '#a8a8b0'),
  ord2: P('M3.500 5.500h9v6h-9z', '#333', 1, '#a8a8b0') + P('M.5.500h9v7h-9zM6.500 8.500h9v7h-9z', '#444', 1, '#fff'),
  ord3: P('M.5 1.500h11v8H.5z', '#444', 1, '#fff') + P('M4.500 6.500h11v8h-11z', '#444', 1, '#c0c0c0'),
  ord4: P('M7.500 7.500h8v7h-8z', '#444', 1, '#b0b0b8') + P('M.5 1.500h11v8H.5z', '#444', 1, '#fff'),
  abc: '<text x="0" y="7" font-family="Liberation Mono" font-size="8" font-weight="bold">ABC</text>' + P('M13 4h2v6M4.500 9v4h7', '#333') + F('M16 11v5h-5z', '#000'),
  hatchback: P('M.5 1.500h11v8H.5z', '#444', 1, '#98989c') + P('M15.500 4v11M6 15.500h10M8 15l7-6M8 11l5 4M12 15l4-3', '#333'),

  // duct tools
  t1: P('M1 1h14v14H1z', '#104898', 2, '#fff') + P('M3 4h3v3H3zM3 9h3v3H3zM8 12h5', '#1878c8') + F('M6 6l4-3 4 1v5H7z', '#c88868'),
  t2: F('M0 0h16v6h-16zM0 6h6v9h-6z', '#888') + P('M5 2v5M2 7h7', '#fff') + P('M6 12.500h10M8 10v5M13 10v5', N),
  t3: P('M1 5V1h6l2 1h4l2 4v3H9L7 6H2', '#000', 1.5, '#fff') + P('M3 9c3 0 2 2 0 3M3 14v1', '#8020c0', 1.5) + F('M8 12l4-3v2h4v3h-4v2z', '#108020'),
  t4: '<circle cx="4" cy="4" r="3.500" fill="#ddd" stroke="#104888"/><circle cx="11" cy="12" r="3.500" fill="#bbb" stroke="#333"/>' + P('M8 3h6v4M6 9l5-2', '#104888', 2),
  t5: P('M1.500 1.500h13v13h-13z', '#1c4c98', 1, '#4c88d8') + F('M4 2h8v5h-8z', '#dce8fa') + F('M4 10h8v5h-8z', '#e8e8e8'),
  t6: P('M3 1v14M7 1v14', '#000') + P('M13.500 0v16', '#e02020', 3) + P('M11 4L3 4l3-2M4 12h8L9 14', '#108030'),
  t7: P('M12 1c5 6-6 3-8 7s-1 5-5 5', '#e83030', 1.5),
  t8: P('M15 2H2v14M15 5H5v11', '#000') + '<circle cx="10" cy="10" r="3" fill="#20c020" stroke="#106010"/>',
  t9: P('M0 14h16', '#e02020', 2) + P('M6 11l6-9', '#222', 4) + P('M7 9l3-5', '#e8c840', 2),
  t10: F('M0 2h16v2h-16zM2 5h12v4h-12z', '#2878e0') + P('M0 10.500h16M2 14h12', '#333', 2),
  t11: P('M0 12h16', T, 2) + P('M8 5v7', '#1060d0', 3) + '<circle cx="8" cy="3" r="2" fill="#fff" stroke="#60c0f0"/>',
  t12: P('M1.500 5h7v6h-7z', N, 1.500, '#70e0f0') + P('M8 8h5', N, 2) + P('M14 0v16', '#108020', 2),
  t13: P('M4 3h8v4H4z', N, 1.500, '#70e0f0') + P('M0 12h16', T, 2),
  t14: P('M0 8h16', '#209060') + P('M5 4v8l6-8v8z', T),
  t15: P('M0 5h16M7 1v15M12 5v11M1 2l4 3', N, 2),
  t16: P('M1 14V2h14', T, 1.5) + P('M2 6h13M2 10h13M2 14h13', N, 2),
  t17: F('M0 1h9v5h-9z', '#101090') + F('M8 1c5 0 7 3 7 8h-6V6h-2z', N) + F('M9 9h6v6h-6z', '#101090') + P('M8 1v5M9 9h6', '#e0c020', 1.5),
  t18: P('M1 1l4 4M15 1l-4 4M1 15l4-4M15 15l-4-4M4.500 4h7v8h-7z', N, 2) + P('M8 6v4', '#4080ff', 2),
  t19: P('M0 4h16M0 12h16', N, 2.5) + P('M4 2v12M10 2v12M5 12l5-8', T),
  t20: P('M15 3H9C2 3 2 13 9 13h6', N, 2.5) + P('M5 1v14M12 1v14M0 8h5', M),
  t21: P('M0 3h16M3 3v4h3v8M13 3v4h-3v8', N, 2.5) + P('M2 1v6h12V1M5 12h6', M),
  t22: P('M0 5h4l2-4M0 11h4l2 4M16 5h-4l-2-4M16 11h-4l-2 4', N, 2.5) + P('M3 3v10M13 3v10M5 2h6M5 14h6', M),
  t23: P('M2 3h12M2 1l-1 2 3 2M12 1l2 2', '#e82020', 1.5) + F('M1 6h14l-4 4v5H8l-3-5z', N) + P('M4 7h9M7 11h4', M),
  t24: P('M1.500 2h13v12h-13z', '#000', 1, '#446') + P('M2 12L14 4M2 5l12 8', '#fff', 1.5) + F('M3 2h8l2 4h-8z', '#e0c8b0'),
  t25: P('M1 7h8v6H1zM1 7l2-3h8v6l-2 3', '#108060', 1.5, '#b0ece0') + P('M11 8h3M15 2v12', N, 2),
  t29: P('M1 9.500h15M3 5v10M9 5v10M15 5v10', '#000') + F('M2 1h2v2h-2zM8 1h2v2h-2zM14 1h2v2h-2z', '#e04040'),
  t30: F('M0 0h16v16h-16z', '#fff000') + '<circle cx="8" cy="8" r="5" fill="none" stroke="#e08000" stroke-width="1.500"/><circle cx="8" cy="8" r="2" fill="none" stroke="#e08000"/>',
  t31: F('M1 1h8v3h6v11h-14z', '#108030') + P('M4 4v7h2V4zM8 7v6M11 7v6M2 13h12', '#fff'),
  t32: P('M2 15V8h5V4h8', '#101070', 4) + F('M8 5h7v9h-5z', N) + P('M5 4v7M12 2v12', '#aac'),
  mat: P('M6.500 3.500h9v12h-14v-6h14M1.500 12.500h14M6.500 6v9M10.500 4v11M6.500 6.500h9', '#000') + F('M0 1l3 2 3-2v5l-3-2-3 2z', '#108020') + F('M2 3h2v2h-2z', '#e8d020'),
  zi: P('M2 6V4h12v2M8 1v2M5 7.500h6L8 10v5H6M2 11h12', '#222', 1.5),
  clash: P('M4 1v14', '#60e040', 1.5) + P('M12 1v14', '#f040e0', 1.5) + P('M0 8h16M5 6l3 2-3 2M11 6L8 8l3 2', '#108050'),
  cube: P('M1.500 6.500h9v8h-9z', '#222', 1.5, '#fff') + P('M1.500 6l4-4h9l-4 4z', '#222', 1, '#50e8e8') + P('M10.500 14.500l4-4V2', '#222', 1.5),
  eye: P('M1 8c4-6 10-6 14 0-4 6-10 6-14 0z', '#000', 2, '#fff') + '<circle cx="8" cy="8" r="4" fill="#208010"/><circle cx="8" cy="8" r="1.500" fill="#f0f020"/>',
  section: F('M1 9l4-3h6l3 4v6H1z', '#4090d8') + P('M1 2l5 5', '#c07030', 3) + P('M6 7l9 8', '#fff', 2) + P('M11 3l4 5', '#333'),
  arrow: F('M5 3l5 5-5 5z', '#1c4c9c'), arrowdown: F('M3 6h10l-5 5z', '#1c4c9c'),

  dots: F('M0 3h1v2H0zM3 3h1v2H3zM6 3h1v2H6zM9 3h1v2H9zM12 3h1v2h-1zM15 3h1v2h-1zM0 7h1v2H0zM3 7h1v2H3zM6 7h1v2H6zM9 7h1v2H9zM12 7h1v2h-1zM15 7h1v2h-1z', '#bbb'),
  cx: P('M4 4l8 8M12 4l-8 8', '#fff', 2),
  wrench: P('M5 5l9 9', '#fff', 2.5) + P('M3 2a3 3 0 1 0 4 4', '#fff', 2),
  prompt: P('M.5 2.500h14v11H.5z', '#888', 1, '#e8eef4') + P('M4 5l3 3-3 3M8 11.500h4', '#345'),

  // status bar
  s1: P('M0 6h12M7 0v12M5 4h4v4H5z', '#222') + P('M10.500 15v-5h4v3', '#b06030', 1.5),
  s2: F('M1 3h1v1H1zM4 3h1v1H4zM7 3h1v1H7zM10 3h1v1h-1zM1 7h1v1H1zM4 7h1v1H4zM7 7h1v1H7zM10 7h1v1h-1zM1 11h1v1H1zM4 11h1v1H4zM7 11h1v1H7zM10 11h1v1h-1zM13 2h1v10h-1z', '#111'),
  s3: P('M.5.500h15v15H.5zM3.500 0v16M6.500 0v16M9.500 0v16M12.500 0v16M0 3.500h16M0 6.500h16M0 9.500h16M0 12.500h16', '#222', 1, '#f0f0f0'),
  s4: P('M1.500 2v12.500H16M2 9.500h5v5', '#444'),
  s5: P('M10 5a5 5 0 1 0 2 5M2 12l11-9M5 9h8V4', '#222'),
  s6: P('M3.500 3.500h12v12h-12z', '#555', 1, '#f4f4f4') + '<circle cx="3" cy="3" r="2" fill="#fff" stroke="#e06020"/>',
  s7: P('M3.500 4.500h9v9h-9zM3.500 4l3-3h9v9l-3 3M12.500 4l3-3', '#555', 1, '#f0f0f0') + '<circle cx="3" cy="13" r="2" fill="#fff" stroke="#e06020"/>',
  s8: P('M12 3L2 12.500H13', '#111', 1.5), s9: P('M2.500 1v15M0 12.500h16M3 12L12 4', '#345') + P('M12 1l-3 5h4l-3 5', '#e89020', 1.5),
  s10: P('M1 7.500h8M5 4v8M8 8h6v4H8z', '#111', 1.5), s11: P('M2 8h13M8 2v12', '#111', 2),
  s12: P('M.5.500h15v15H.5z', '#3078a8', 1, '#fff') + F('M2 2h3v3h-3zM8 2h3v3h-3zM5 5h3v3h-3zM11 5h3v3h-3zM2 8h3v3h-3zM8 8h3v3h-3zM5 11h3v3h-3zM11 11h3v3h-3z', '#80b8e0'),
  s13: P('M4.500 3.500h7v10h-7zM6 6h1M8 6h2M6 8.500h1M8 8.500h2M6 11h1M8 11h2', '#111', 1.2, '#eee'),
  s14: P('M0 4.500h8M4.500 0v8', '#222') + P('M6.500 5.500h7v7h-7z', '#345', 1, '#e8e8e8') + P('M9.500 8.500h6v7h-6z', '#345', 1, '#70b070'),
  s15: P('M5.500.500h5v5h5v5h-5v5h-5v-5h-5v-5h5z', '#555', 1, '#f8f8f8'),
  r1: P('M1.500 2.500h13v10h-13zM1 14h14M5 4v7h6z', '#222', 1, '#ddd'), r2: P('M.5 2.500h6v6h-6zM8.500 2.500h7v6h-7zM0 13h16', '#333', 1.5, '#eee'),
  anno: P('M8 1l2 7 5 5-5-2H6l-5 2 5-5z', '#333', 1, '#eee'),
  anno2: P('M7 1l2 7 5 5-5-2H5l-4 2 4-5z', '#333', 1, '#eee') + '<circle cx="12" cy="11" r="2.500" fill="#ffe060" stroke="#e08020"/>',
  anno3: P('M7 1l2 7 5 5-5-2H5l-4 2 4-5zM12 2l-3 4h5l-4 5', '#777', 1, '#bbb'),
  gear: '<circle cx="8" cy="8" r="6" fill="#eee" stroke="#444" stroke-width="3" stroke-dasharray="3 1.700"/><circle cx="8" cy="8" r="5.500" fill="#eee"/><circle cx="8" cy="8" r="2.500" fill="#999" stroke="#333"/>',
  lock: P('M1.500 7.500h9v7h-9zM6 9v3', '#222', 1.5, '#eee') + P('M9 7V3c1-3 5-3 5 0v3', '#333', 1.5),
  ball: '<circle cx="8" cy="8" r="6.500" fill="#777"/>' + P('M5 3l4 5', '#ddd', 2),
  monitor: P('M1 1h9l4 3v8H1z', '#224', 1, '#4888c8') + F('M2 2h6v3h-6z', '#f0c830') + P('M6 11l3 3 6-7', '#40a020', 2.5),
  bulb: P('M8 1c6 0 5 5 2.500 8v2h-5V9C3 6 2 1 8 1z', '#a07818', 1, '#ffe890') + P('M6 12.500h4M6 14.500h4', '#444'),
  clean: P('M1.500 1.500h14v12h-14z', '#222', 1, '#f4f4f4') + F('M2 2h13v3h-13z', '#666'),
  corner: F('M12 3h2v2h-2zM8 7h2v2H8zM12 7h2v2h-2zM4 11h2v2H4zM8 11h2v2H8zM12 11h2v2h-2z', '#eee'),

  // floating windows
  pin: P('M5.500 2.500h5v7h-5zM3 9.500h10M8 10v4', '#123880', 1, '#c0dcfc'),
  bhelp: P('M5.500 6c0-4 6-4 6 0 0 2-3 2-3 4M8.500 12v2', '#123880', 4) + P('M5.500 6c0-4 6-4 6 0 0 2-3 2-3 4M8.500 12v2', '#d8ecff', 1.5),
  bclose: P('M4 4l8 8M12 4l-8 8', '#123880', 4) + P('M4 4l8 8M12 4l-8 8', '#d8ecff', 1.5),
  acad: F('M0 0h16v16h-16z', '#e8a8a0') + F('M8 2l6 11-4 1-1-2H7l-1 2-4-1z', '#b01808') + F('M8 2v6l-5 6-1-1z', '#d84838'),
  xmin: P('M3 12h6', '#a8c4fc', 3), xmax: P('M2 4h12v9H2z', '#fff', 2) + P('M1 3h14', '#fff', 2), xclose: P('M3 3l10 10M13 3L3 13', '#fff', 2.2),
  lt1: P('M3 3l5 5 5-5M3 13l5-5 5 5', '#ccc') + F('M1 1h3v3H1zM12 1h3v3h-3zM6 5h3v3H6zM12 8h3v3h-3zM5 12h3v3H5z', '#e02838') + F('M5 1h3v3H5zM6 8h4v3H6zM1 8h3v3H1zM1 12h3v3H1zM12 12h3v3h-3z', '#3058a8'),
  lt2: F('M8 0l8 15H0z', '#d03038') + P('M5 7h6M3 10h10M1 13h14M5 14l4-9M10 14L6 7', '#f8c0c0'),
  lt3: P('M2 2l12 12M14 2L2 14', '#e81818', 2.2), lt4: P('M2 2l12 12M14 2L2 14', '#111', 2.2),
  lt5: P('M1.500 1.500h5v3h-5z', '#e02020') + P('M9.500 1.500h5v3h-5zM1.500 6.500h5v3h-5zM9.500 6.500h5v3h-5zM1.500 11.500h5v3h-5zM9.500 11.500h5v3h-5z', '#4878b8', 1, '#e4f0fa'),
  lt6: P('M8 1.500l6 6h-3v7H5v-7H2z', '#386898', 1, '#3c98e0'), lt7: P('M8 14.500l6-6h-3v-7H5v7H2z', '#386898', 1, '#3c98e0'),
  lt8: P('M1 7L4 0l3 7M2 5h4', '#203878', 1.8) + P('M1 9.500h5L1 15h6', '#984030', 1.8) + P('M12 1v13M9.500 11l2.500 3 2.500-3', '#203878', 1.5),
  lt9: '<rect x="1" y="1" width="14" height="14" rx="2" fill="#2888c0"/><text x="2" y="12" font-family="Liberation Sans" font-size="9" font-weight="bold" fill="#fff">OK</text>',
  dwg: F('M0 0h14v14h-14z', '#187878') + P('M7 2v3M7 9v3M2 7h3M9 7h3M4 4l1 1M10 4L9 5M4 10l1-1', '#fff') + F('M14 9v5h-5z', '#384878') + P('M6.500 6.500h1v1h-1z', '#fff'),
  folder: P('M1.500 4.500l1-2h4l1 2h7v9h-13z', '#665', 1, '#e8e080')
};

function svg(name) {
  return `<svg width="16" height="16" viewBox="0 0 16 16">${icons[name]}</svg>`;
}

document.querySelectorAll('[data-icons]').forEach(el => {
  el.innerHTML = el.dataset.icons.split(' ').map(n => {
    if (n === '|') return '<span class="sep"></span>';
    if (n === '_') return '<span class="sep-h"></span>';
    return `<button class="${n}" title="${n}">${svg(n)}</button>`;
  }).join('');
});

document.querySelectorAll('[data-icon]').forEach(el => {
  el.innerHTML = svg(el.dataset.icon);
});

// data-sb: space before the thumb, thumb size, space after
document.querySelectorAll('[data-sb]').forEach(el => {
  const [before, size, after] = el.dataset.sb.split(' ');
  const v = el.classList.contains('v');
  el.innerHTML = `<button title="-">${svg(v ? 'up' : 'left')}</button>
    <span style="flex:${before} 0 0"></span><span class="thumb" style="flex:0 0 ${size}px"></span>
    <span style="flex:${after} 0 0"></span><button title="+">${svg(v ? 'down' : 'right')}</button>`;
});

// left palette
const rows = [];
for (let i = 0; i < 8; i++) rows.push(['arrow', '']);
rows.push(['arrowdown', ''], 'first');
['t18', 't19', 't25', 't12', 't16', 't24', 't8', 't9'].forEach(n => rows.push([n, '']));
rows.push('', ['t5', ''], ['t25', ''], ['t22', ''], '', ['clash', ''], ['section', '剖 面 图'], '',
  ['mat', '材料统计'], '', ['clash', '碰撞检查'], ['cube', '平 面 图'], ['eye', '三维观察'], 'wide',
  ['arrow', '计 算'], '', ['arrow', '专业标注'], ['arrow', '符号标注'], ['arrow', '尺寸标注']);
document.getElementById('palette').insertAdjacentHTML('beforeend', rows.map(r =>
  typeof r === 'string' ? `<div class="palette-sep ${r}"></div>`
    : `<button class="palette-row">${svg(r[0])}<span>${r[1].includes(' ') ? r[1].split(' ').map(c => `<i>${c}</i>`).join('') : r[1]}</span></button>`
).join(''));

// category tree
const tree = ['自定义设备', '冷却塔', '水泵', '静压箱', '风机盘管', '风口', '风机', '空调器', '分集水器', '采暖设备'];
document.getElementById('tree').innerHTML =
  `<li><svg width="18" height="14" viewBox="-2 1 18 14">${icons.folder}</svg>THvacSys</li>` +
  tree.map((t, i) => `<li><svg width="36" height="14" viewBox="0 0 36 14">
    <path d="M10.500 0V14M12 7.500H22" stroke="#999" stroke-dasharray="1 1"/>
    ${i > 1 ? '<path d="M7.500 4.500h6v6h-6z" fill="#fff" stroke="#888"/><path d="M9 7.500h3M10.500 6v3" stroke="#000"/>' : ''}
    <g transform="translate(22 0)">${icons.dwg}</g></svg><span class="${t === '风口' ? 'sel' : ''}">${t}</span></li>`).join('');

let list = '';
for (let i = 0; i < 13; i++) {
  list += `<li class="${i === 11 ? 'hot' : ''}"><svg width="14" height="14" viewBox="0 0 14 14">${icons.dwg}</svg>方形散流器${i > 4 ? '_00000142' : ''}</li>`;
}
document.getElementById('list').innerHTML = list;

// block previews, symmetric parts are mirrored about (93.5, 58)
const box = (x1, y1, x2, y2) => `M${x1} ${y1}H${x2}V${y2}H${x1}Z`;
const four = a => ['', 'translate(187 0) scale(-1 1)', 'translate(0 116) scale(1 -1)', 'translate(187 116) scale(-1 -1)']
  .map(t => `<g transform="${t}">${a}</g>`).join('');
const arrow = (tip, b1, b2, tail) => `<path d="M${tip}L${tail}" stroke="#fff"/><path d="M${tip}L${b1}L${b2}Z" fill="#fff"/>`;
const line = d => `<path d="${d}" fill="none" stroke="#fff"/>`;
const grille = line(box(59.5, 31.5, 127.5, 84.5) + box(62.5, 34.5, 124.5, 81.5) +
  [38.5, 45.5, 51.5, 58.5, 65.5, 72.5].map(y => box(66.5, y, 120.5, y + 5)).join(''));
const thumbs = [
  four(arrow('25 5', '42 13', '35 18', '54 27')) + grille,
  line(box(28.5, 5.5, 158.5, 110.5) + box(34.5, 11.5, 152.5, 104.5) +
    [22.5, 34.5, 45.5, 57.5, 68.5, 80.5, 92.5].map(y => `M34 ${y}H152`).join('') +
    'M28 5l6 6M159 5l-6 6M28 111l6-6M159 111l-6-6'),
  line(box(60.5, 25.5, 126.5, 90.5) + box(77.5, 41.5, 109.5, 74.5)) + four(line('M42 21.500H57.500V5M45 10L57 21')),
  four(arrow('61 28', '52 13', '46 19', '37 6')) + line([[62.5, 29.5], [68.5, 35.5], [72.5, 39.5], [78.5, 44.5], [83.5, 49.5], [88.5, 55.5]]
    .map(p => box(p[0], p[1], 187 - p[0], 117 - p[1])).join('') + 'M62 29l26 26M125 29l-26 26M62 88l26-26M125 88l-26-26'),
  four(arrow('36 28', '20 15', '17 21', '6 12')) + line(box(48.5, 34.5, 140.5, 83.5) + box(56.5, 42.5, 132.5, 75.5) +
    box(64.5, 50.5, 124.5, 67.5) + 'M72 58.500H117M48 34L72 58L48 84M141 34L117 58L141 84'),
  four(arrow('54 27', '44 14', '38 19', '25 5')) + grille
];
document.getElementById('thumbs').innerHTML = thumbs.map(t =>
  `<button title="方形散流器"><svg width="187" height="115" viewBox="0 0 187 115" shape-rendering="crispEdges">${t}</svg></button>`).join('');
```
